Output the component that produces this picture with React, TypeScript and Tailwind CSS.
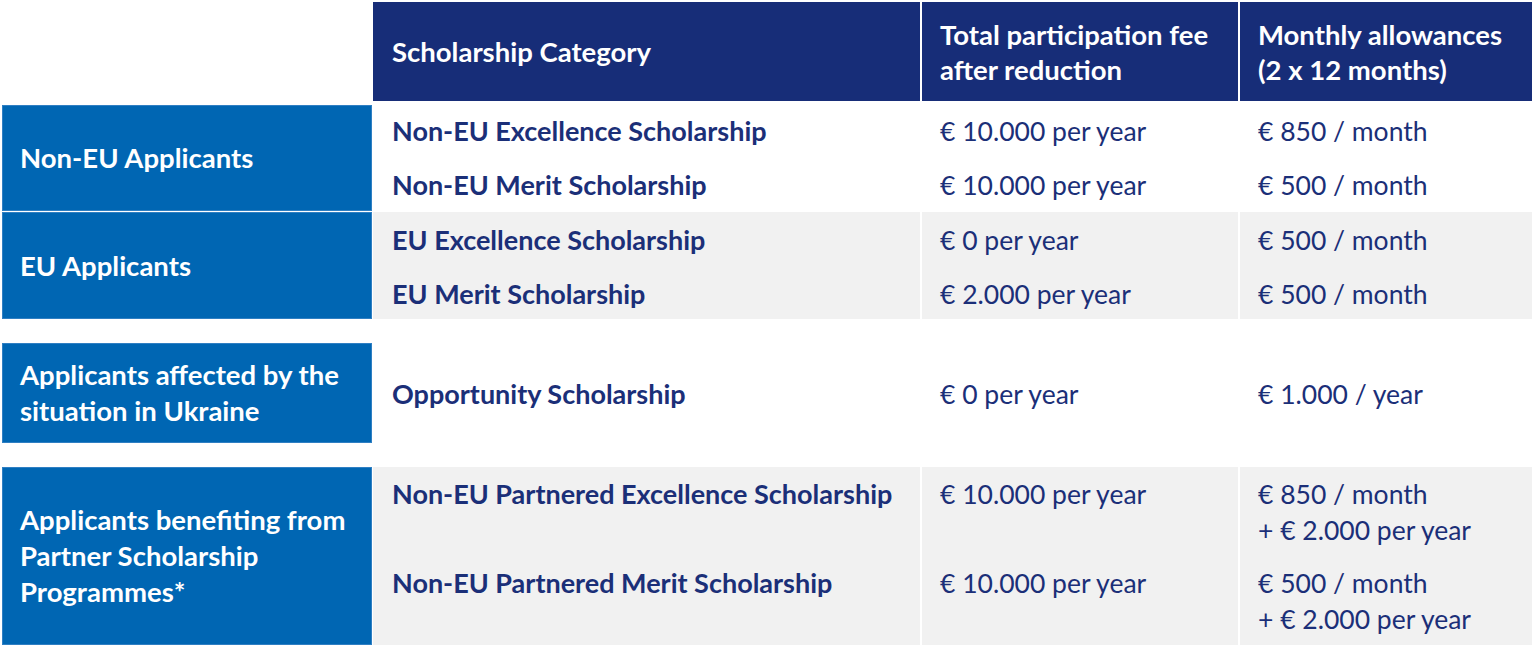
import React from 'react';

type Sub = { name: string; fee: string; allowance: string[]; h: string; pt: string };
type Group = { label: string[]; bg: string; h: string; gapTop: string; rows: Sub[] };

const groups: Group[] = [
  {
    label: ['Non-EU Applicants'],
    bg: 'bg-white',
    h: 'h-[106px]',
    gapTop: 'mt-[4px]',
    rows: [
      { name: 'Non-EU Excellence Scholarship', fee: '€ 10.000 per year', allowance: ['€ 850 / month'], h: 'h-[53px]', pt: 'pt-[8px]' },
      { name: 'Non-EU Merit Scholarship', fee: '€ 10.000 per year', allowance: ['€ 500 / month'], h: 'h-[53px]', pt: 'pt-[9px]' },
    ],
  },
  {
    label: ['EU Applicants'],
    bg: 'bg-[#f1f1f1]',
    h: 'h-[107px]',
    gapTop: 'mt-px',
    rows: [
      { name: 'EU Excellence Scholarship', fee: '€ 0 per year', allowance: ['€ 500 / month'], h: 'h-[54px]', pt: 'pt-[10px]' },
      { name: 'EU Merit Scholarship', fee: '€ 2.000 per year', allowance: ['€ 500 / month'], h: 'h-[53px]', pt: 'pt-[10px]' },
    ],
  },
  {
    label: ['Applicants affected by the', 'situation in Ukraine'],
    bg: 'bg-white',
    h: 'h-[100px]',
    gapTop: 'mt-[24px]',
    rows: [
      { name: 'Opportunity Scholarship', fee: '€ 0 per year', allowance: ['€ 1.000 / year'], h: 'h-[100px]', pt: 'pt-[33px]' },
    ],
  },
  {
    label: ['Applicants benefiting from', 'Partner Scholarship', 'Programmes*'],
    bg: 'bg-[#f1f1f1]',
    h: 'h-[178px]',
    gapTop: 'mt-[24px]',
    rows: [
      { name: 'Non-EU Partnered Excellence Scholarship', fee: '€ 10.000 per year', allowance: ['€ 850 / month', '+ € 2.000 per year'], h: 'h-[89px]', pt: 'pt-[9px]' },
      { name: 'Non-EU Partnered Merit Scholarship', fee: '€ 10.000 per year', allowance: ['€ 500 / month', '+ € 2.000 per year'], h: 'h-[89px]', pt: 'pt-[9px]' },
    ],
  },
];

export default function App() {
  return (
    <div className="w-[1536px] h-[654px] bg-white pt-[2px] pl-[2px] font-['Lato','Noto_Sans',sans-serif] text-[26.5px] leading-[36px]">
      {/* header */}
      <div className="flex h-[99px] ml-[371px] gap-[2px] font-bold text-white text-[27.5px] leading-[35px]">
        <div className="w-[547px] bg-[#172d78] flex items-center pl-[19px]">Scholarship Category</div>
        <div className="w-[316px] bg-[#172d78] flex items-center pl-[18px]">
          <div>Total participation fee<br />after reduction</div>
        </div>
        <div className="w-[292px] bg-[#172d78] flex items-center pl-[18px]">
          <div>Monthly allowances<br />(2 x 12 months)</div>
        </div>
      </div>

      {groups.map((g, i) => (
        <div key={i} className={`flex ${g.h} ${g.gapTop}`}>
          <div className="w-[370px] mr-px bg-[#0066b3] border border-[#2f7fc3] flex items-center pl-[17px] font-bold text-white text-[27.5px]">
            <div>
              {g.label.map((l) => (
                <div key={l}>{l}</div>
              ))}
            </div>
          </div>
          <div className="flex flex-col">
            {g.rows.map((r) => (
              <div key={r.name} className={`flex gap-[2px] ${r.h} text-[#1b2f78]`}>
                <div className={`w-[547px] ${g.bg} pl-[19px] ${r.pt} font-bold text-[27px]`}>{r.name}</div>
                <div className={`w-[316px] ${g.bg} pl-[18px] ${r.pt}`}>{r.fee}</div>
                <div className={`w-[292px] ${g.bg} pl-[18px] ${r.pt}`}>
                  {r.allowance.map((a) => (
                    <div key={a}>{a}</div>
                  ))}
                </div>
              </div>
            ))}
          </div>
        </div>
      ))}
    </div>
  );
}
